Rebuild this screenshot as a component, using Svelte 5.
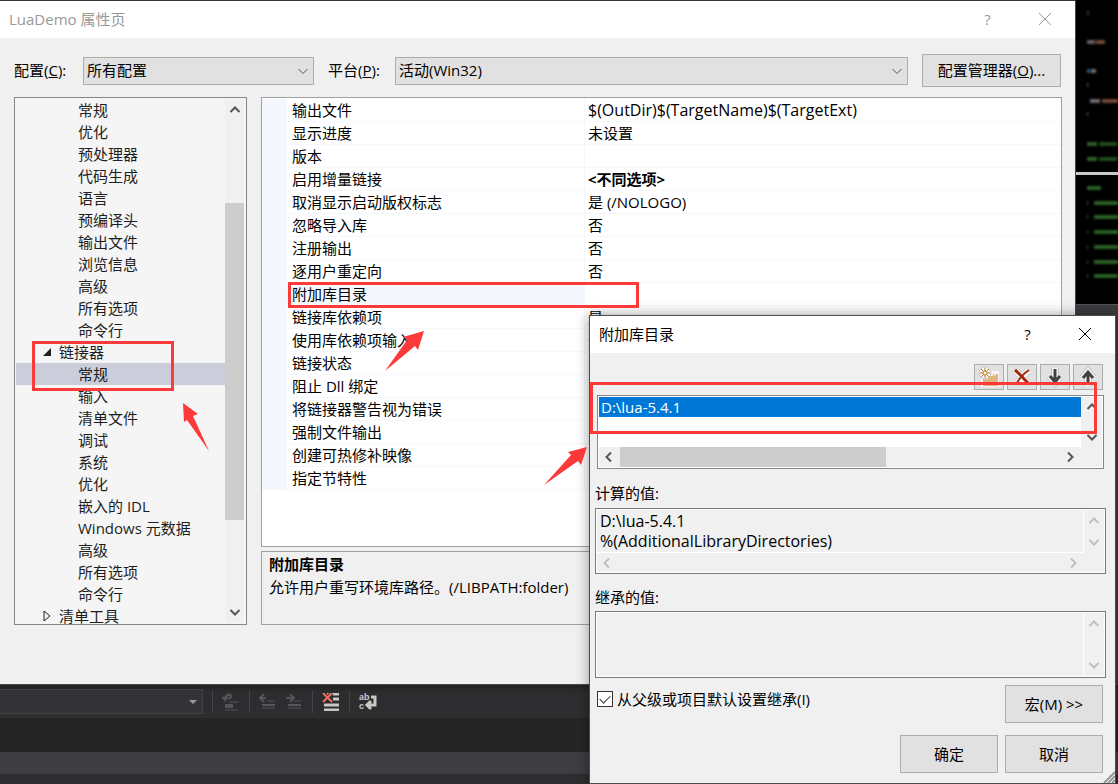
<script lang="ts">
	interface TreeNode {
		label: string;
		state?: 'open' | 'closed';
	}

	interface Property {
		name: string;
		value: string;
		changed?: boolean;
		macro?: boolean;
	}

	const tree: TreeNode[] = [
		{ label: '常规' },
		{ label: '优化' },
		{ label: '预处理器' },
		{ label: '代码生成' },
		{ label: '语言' },
		{ label: '预编译头' },
		{ label: '输出文件' },
		{ label: '浏览信息' },
		{ label: '高级' },
		{ label: '所有选项' },
		{ label: '命令行' },
		{ label: '链接器', state: 'open' },
		{ label: '常规' },
		{ label: '输入' },
		{ label: '清单文件' },
		{ label: '调试' },
		{ label: '系统' },
		{ label: '优化' },
		{ label: '嵌入的 IDL' },
		{ label: 'Windows 元数据' },
		{ label: '高级' },
		{ label: '所有选项' },
		{ label: '命令行' },
		{ label: '清单工具', state: 'closed' },
	];

	const properties: Property[] = [
		{ name: '输出文件', value: '$(OutDir)$(TargetName)$(TargetExt)', macro: true },
		{ name: '显示进度', value: '未设置' },
		{ name: '版本', value: '' },
		{ name: '启用增量链接', value: '<不同选项>', changed: true },
		{ name: '取消显示启动版权标志', value: '是 (/NOLOGO)' },
		{ name: '忽略导入库', value: '否' },
		{ name: '注册输出', value: '否' },
		{ name: '逐用户重定向', value: '否' },
		{ name: '附加库目录', value: '' },
		{ name: '链接库依赖项', value: '是' },
		{ name: '使用库依赖项输入', value: '否' },
		{ name: '链接状态', value: '' },
		{ name: '阻止 Dll 绑定', value: '' },
		{ name: '将链接器警告视为错误', value: '' },
		{ name: '强制文件输出', value: '' },
		{ name: '创建可热修补映像', value: '' },
		{ name: '指定节特性', value: '' },
	];

	// [x, y, width, colour] of the tiny code lines behind the windows
	const codeLines: [number, number, number, string][] = [
		[11, 13, 2, '#2f6b2a'],
		[11, 42, 8, '#8c8c8c'],
		[20, 42, 9, '#a8674c'],
		[11, 71, 3, '#3c7fc0'],
		[15, 71, 5, '#a0a0a0'],
		[11, 85, 1, '#8c8c8c'],
		[14, 101, 10, '#9a9a9a'],
		[26, 101, 17, '#a8674c'],
		[11, 114, 1, '#8c8c8c'],
		[11, 144, 10, '#3c8a35'],
		[23, 144, 18, '#2f6b2a'],
		[11, 159, 10, '#3c8a35'],
		[23, 159, 18, '#2f6b2a'],
		[11, 188, 14, '#3c8a35'],
		...[203, 217, 232, 247, 262, 276].flatMap((y): [number, number, number, string][] => [
			[11, y, 1, '#3c8a35'],
			[18, y, 24, '#3c8a35'],
		]),
	];

	const turns = { down: 0, left: 90, up: 180, right: 270 };

	let selectedNode = $state(12);
	let selectedProperty = $state(8);
	let inherit = $state(true);
	let directory = $state('D:\\lua-5.4.1');
	let computed = $derived(`${directory}\n%(AdditionalLibraryDirectories)`);
</script>

{#snippet chevron(dir: 'up' | 'down' | 'left' | 'right')}
	<svg class="chevron" viewBox="0 0 12 12" aria-hidden="true">
		<path d="M1.5 4l4.500 4.500 4.500-4.500" transform="rotate({turns[dir]} 6 6)" />
	</svg>
{/snippet}

{#snippet cross()}
	<svg viewBox="0 0 14 14" width="14" height="14" fill="none" stroke="currentColor" aria-hidden="true">
		<path d="M1 1l12 12M13 1L1 13" />
	</svg>
{/snippet}

<div class="screen">
	<div class="upper">
		<section class="window props">
			<header class="title-bar inactive">
				<h1>LuaDemo 属性页</h1>
				<button class="caption" aria-label="帮助">?</button>
				<button class="caption" aria-label="关闭">{@render cross()}</button>
			</header>

			<div class="config">
				<label for="configuration">配置(<u>C</u>):</label>
				<div class="combo">
					<select id="configuration">
						<option>所有配置</option>
					</select>
					{@render chevron('down')}
				</div>
				<label for="platform">平台(<u>P</u>):</label>
				<div class="combo">
					<select id="platform">
						<option>活动(Win32)</option>
					</select>
					{@render chevron('down')}
				</div>
				<button class="push">配置管理器(<u>O</u>)...</button>
			</div>

			<div class="panes">
				<div class="tree">
					<ul role="tree">
						{#each tree as node, i}
							<li role="treeitem" aria-selected={selectedNode === i}>
								<button class="node" class:group={node.state} class:selected={selectedNode === i} onclick={() => (selectedNode = i)}>
									{#if node.state}
										<svg viewBox="0 0 10 12" width="10" height="12" aria-hidden="true">
											{#if node.state === 'open'}
												<path d="M9 2v8H1z" fill="#1e1e1e" />
											{:else}
												<path d="M2 1v10l6-5z" fill="none" stroke="#1e1e1e" />
											{/if}
										</svg>
									{/if}
									{node.label}
								</button>
							</li>
						{/each}
					</ul>
					<div class="scroll vertical">
						{@render chevron('up')}
						<div class="track"><div class="thumb"></div></div>
						{@render chevron('down')}
					</div>
				</div>

				<div class="detail">
					<div class="grid">
						<table>
							<colgroup>
								<col class="gutter" />
								<col class="name" />
								<col />
							</colgroup>
							<tbody>
								{#each properties as property, i}
									<tr class:selected={selectedProperty === i} onclick={() => (selectedProperty = i)}>
										<td class="gutter"></td>
										<th scope="row">{property.name}</th>
										<td class:changed={property.changed} class:macro={property.macro}>{property.value}</td>
									</tr>
								{/each}
							</tbody>
						</table>
					</div>
					<div class="description">
						<strong>{properties[selectedProperty].name}</strong>
						<p>允许用户重写环境库路径。(/LIBPATH:folder)</p>
					</div>
				</div>
			</div>
		</section>

		<div class="editor">
			<svg class="code" width="42" height="304" aria-hidden="true">
				{#each codeLines as [x, y, width, colour]}
					<line x1={x} x2={x + width} y1={y} y2={y} stroke={colour} stroke-width="4" />
				{/each}
			</svg>
			<div class="split"></div>
		</div>
	</div>

	<footer class="ide">
		<div class="ide-toolbar">
			<div class="ide-combo">
				<svg viewBox="0 0 8 4" width="8" height="4"><path d="M0 0h8L4 4z" fill="#999" /></svg>
			</div>
			<div class="ide-group">
				<button aria-label="转到上一条消息">
					<svg viewBox="0 0 18 18" width="18" height="18" fill="none" stroke="#555558" stroke-width="2">
						<path d="M3 7C3 2 6 1 8 2c2 1 1 3-1 4M0 4l3 3 3-3" />
						<path d="M7 9h10M3 17h13" stroke-width="1" />
						<path d="M3 11h8v4H3z" fill="#555558" stroke="none" />
					</svg>
				</button>
			</div>
			<div class="ide-group">
				<button aria-label="上一条">
					<svg viewBox="0 0 18 18" width="18" height="18" fill="none" stroke="#555558" stroke-width="2">
						<path d="M1 5h6M5 1L1 5l4 4M3 12h13" />
						<path d="M8 8h8M3 15h13" stroke-width="1" />
					</svg>
				</button>
				<button aria-label="下一条">
					<svg viewBox="0 0 18 18" width="18" height="18" fill="none" stroke="#555558" stroke-width="2">
						<path d="M1 5h7M5 1l4 4-4 4M3 12h13" />
						<path d="M9 8h7M3 15h13" stroke-width="1" />
					</svg>
				</button>
			</div>
			<div class="ide-group">
				<button aria-label="全部清除">
					<svg viewBox="0 0 18 18" width="18" height="18" fill="none" stroke="#c8c8c8">
						<path d="M5 1h12M11 6h6M2 12h15M2 17h15" stroke-width="3" />
						<path d="M1 0l9 9M10 0L1 9" stroke="#2d2d30" stroke-width="4" />
						<path d="M1 0l9 9M10 0L1 9" stroke="#f0705a" stroke-width="2" />
					</svg>
				</button>
			</div>
			<div class="ide-group">
				<button aria-label="自动换行">
					<svg viewBox="0 0 18 18" width="18" height="18">
						<text x="0" y="7">ab</text>
						<text x="0" y="16">c</text>
						<path d="M12 4h4v8H9M12 8l-4 4 4 4" fill="none" stroke="#c8c8c8" stroke-width="3" />
					</svg>
				</button>
			</div>
		</div>
		<div class="output"></div>
		<div class="tabs"></div>
		<div class="status"></div>
	</footer>

	<section class="window directories">
		<header class="title-bar">
			<h2>附加库目录</h2>
			<button class="caption" aria-label="帮助">?</button>
			<button class="caption" aria-label="关闭">{@render cross()}</button>
		</header>

		<div class="tools">
			<button class="push" aria-label="新行">
				<svg viewBox="0 0 22 22" width="22" height="22">
					<path d="M3 8h8l2-3h8v16H3z" fill="#f6f6f6" />
					<path d="M5 10h8l2-2h5v12H5z" fill="#dcb67a" />
					<path d="M13 9h5" stroke="#fff" />
					<circle cx="7" cy="7" r="6" fill="#f6f6f6" stroke="#c8c8c8" />
					<path d="M7 2v10M2 7h10M3 3l8 8M11 3l-8 8" stroke="#c27d1a" />
					<circle cx="7" cy="7" r="2" fill="#fff" stroke="#c27d1a" />
				</svg>
			</button>
			<button class="push" aria-label="删除">
				<svg viewBox="0 0 22 22" width="22" height="22" fill="none">
					<path d="M4 4l14 14M18 4L4 19" stroke="#c4c4c4" stroke-width="7" />
					<path d="M4 4l14 14M18 4L4 19" stroke="#f6f6f6" stroke-width="6" />
					<path d="M4 4c5 4 9 9 14 14" stroke="#a1260d" stroke-width="3" />
					<path d="M18 4C12 8 8 12 5 19" stroke="#a1260d" stroke-width="2" />
				</svg>
			</button>
			<button class="push" aria-label="下移">
				<svg viewBox="0 0 22 22" width="22" height="22" fill="none">
					<path d="M11 2v15M6 10l5 6 5-6" stroke="#c4c4c4" stroke-width="8" />
					<path d="M11 2v15M6 10l5 6 5-6" stroke="#f6f6f6" stroke-width="6" />
					<path d="M11 3v13M6 10l5 6 5-6" stroke="#424242" stroke-width="3" />
				</svg>
			</button>
			<button class="push" aria-label="上移">
				<svg viewBox="0 0 22 22" width="22" height="22" fill="none">
					<path d="M11 20V6M6 12l5-6 5 6" stroke="#c4c4c4" stroke-width="8" />
					<path d="M11 20V6M6 12l5-6 5 6" stroke="#f6f6f6" stroke-width="6" />
					<path d="M11 19V6M6 12l5-6 5 6" stroke="#424242" stroke-width="3" />
				</svg>
			</button>
		</div>

		<div class="list">
			<div class="rows">
				<input aria-label="目录" bind:value={directory} />
			</div>
			<div class="scroll vertical">
				{@render chevron('up')}
				{@render chevron('down')}
			</div>
			<div class="scroll horizontal">
				{@render chevron('left')}
				<div class="track"><div class="thumb"></div></div>
				{@render chevron('right')}
			</div>
		</div>

		<label class="caption-label" for="computed">计算的值:</label>
		<div class="readout computed">
			<textarea id="computed" readonly value={computed}></textarea>
			<div class="scroll vertical">
				{@render chevron('up')}
				{@render chevron('down')}
			</div>
			<div class="scroll horizontal">
				{@render chevron('left')}
				{@render chevron('right')}
			</div>
		</div>

		<label class="caption-label" for="inherited">继承的值:</label>
		<div class="readout">
			<textarea id="inherited" readonly></textarea>
			<div class="scroll vertical">
				{@render chevron('up')}
				{@render chevron('down')}
			</div>
		</div>

		<div class="inherit">
			<label>
				<input type="checkbox" bind:checked={inherit} />
				从父级或项目默认设置继承(I)
			</label>
			<button class="push">宏(M) &gt;&gt;</button>
		</div>
		<div class="actions">
			<button class="push">确定</button>
			<button class="push">取消</button>
		</div>
		<svg class="grip" viewBox="0 0 12 12" width="12" height="12" stroke="#999" stroke-width="2" aria-hidden="true">
			<path d="M1 12L12 1M5 12l7-7M9 12l3-3" />
		</svg>
	</section>

	<!-- markup drawn over both windows -->
	<svg class="annotations" aria-hidden="true">
		<g fill="none" stroke="#fc3a3a" stroke-width="3">
			<rect x="33.5" y="342.5" width="139" height="47" />
			<rect x="289.5" y="283.5" width="348" height="23" />
			<rect x="591.5" y="383.5" width="504" height="49" />
		</g>
		<g fill="#fc3a3a">
			<path d="M183 403l15 11-5 2 16 35-22-31-3 2z" />
			<path d="M424 331l-6 19-3-4-30 25 22-31-4-3z" />
			<path d="M587 447l-6 18-3-4-34 24 27-30-3-3z" />
		</g>
	</svg>
</div>

<style>
	:global(body) {
		margin: 0;
		background: #2d2d30;
	}

	.screen {
		position: relative;
		display: flex;
		flex-direction: column;
		height: 100vh;
		overflow: hidden;
		font-family: "Open Sans", "Noto Sans CJK SC", sans-serif;
		font-size: 15px;
		line-height: 20px;
		color: #000;
	}

	button,
	input,
	select,
	textarea {
		box-sizing: border-box;
		margin: 0;
		font: inherit;
		color: inherit;
	}

	.upper {
		flex: 1;
		min-height: 0;
		display: flex;
	}

	.window {
		display: flex;
		flex-direction: column;
		background: #f0f0f0;
	}

	.props {
		flex: 1;
		min-width: 0;
		border-top: 1px solid #3a373b;
		border-right: 1px solid #444;
		padding-bottom: 59px;
	}

	.title-bar {
		display: flex;
		align-items: center;
		height: 37px;
		flex-shrink: 0;
		box-sizing: border-box;
		padding: 0 2px 2px 9px;
		background: #fff;
	}

	.title-bar h1,
	.title-bar h2 {
		flex: 1;
		margin: 0;
		font-size: inherit;
		font-weight: 400;
	}

	.inactive {
		color: #999;
	}

	.caption {
		display: flex;
		align-items: center;
		justify-content: center;
		width: 57px;
		height: 35px;
		padding: 0;
		border: none;
		background: none;
	}

	.push {
		display: flex;
		align-items: center;
		justify-content: center;
		padding: 0;
		border: 1px solid #adadad;
		background: #e1e1e1;
		white-space: nowrap;
	}

	.config {
		display: grid;
		grid-template-columns: 55px 231px 53px 1fr 139px;
		column-gap: 14px;
		align-items: center;
		padding: 16px 14px 10px;
		white-space: nowrap;
	}

	.config .push {
		height: 33px;
		padding-bottom: 2px;
	}

	.config label {
		padding-bottom: 2px;
	}

	.combo {
		display: grid;
		align-items: center;
		height: 28px;
		box-sizing: border-box;
		border: 1px solid #adadad;
		background: #e1e1e1;
	}

	.combo select {
		grid-area: 1 / 1;
		width: 100%;
		height: 26px;
		padding: 0 24px 2px 3px;
		border: none;
		background: none;
		appearance: none;
	}

	.combo .chevron {
		grid-area: 1 / 1;
		justify-self: end;
		margin-right: 4px;
		stroke-width: 1;
		pointer-events: none;
	}

	.chevron {
		width: 12px;
		height: 12px;
		flex-shrink: 0;
		fill: none;
		stroke: #555;
		stroke-width: 2;
	}

	.scroll {
		display: flex;
		align-items: center;
		justify-content: space-between;
		background: #f0f0f0;
	}

	.scroll.vertical {
		flex-direction: column;
	}

	.track {
		flex: 1;
		align-self: stretch;
		display: flex;
	}

	.thumb {
		background: #cdcdcd;
	}

	.panes {
		flex: 1;
		min-height: 0;
		display: flex;
		gap: 14px;
		padding: 0 13px 0 14px;
	}

	.tree {
		display: flex;
		width: 233px;
		flex-shrink: 0;
		box-sizing: border-box;
		overflow: hidden;
		padding: 1px 2px 1px 1px;
		border: 1px solid #828790;
		background: #f5f5f5;
		color: #1e1e1e;
	}

	.tree ul {
		flex: 1;
		margin: 0;
		padding: 0;
		list-style: none;
	}

	.node {
		display: flex;
		align-items: center;
		width: 100%;
		height: 22px;
		padding: 0 0 0 62px;
		border: none;
		background: none;
		text-align: left;
		white-space: nowrap;
	}

	.node.group {
		gap: 7px;
		padding-left: 26px;
	}

	.node.selected {
		background: #cbcddb;
	}

	.tree .scroll {
		width: 19px;
		padding: 5px 0;
	}

	.tree .track {
		flex-direction: column;
		padding: 87px 0 86px;
	}

	.tree .thumb {
		flex: 1;
	}

	.detail {
		flex: 1;
		min-width: 0;
		display: flex;
		flex-direction: column;
		gap: 4px;
	}

	.grid {
		flex: 1;
		min-height: 0;
		overflow: hidden;
		padding-top: 1px;
		border: 1px solid #a0a0a0;
		background: #fff;
	}

	table {
		width: 100%;
		table-layout: fixed;
		border-spacing: 0;
	}

	col.gutter {
		width: 25px;
	}

	col.name {
		width: 298px;
	}

	th,
	td {
		height: 22px;
		padding: 0 0 0 3px;
		border-bottom: 1px solid #f4f7fc;
		font-weight: 400;
		text-align: left;
		white-space: nowrap;
	}

	th {
		padding-left: 5px;
		border-right: 1px solid #f4f7fc;
	}

	td.gutter,
	tr.selected th {
		background: #f4f7fc;
	}

	td.changed {
		font-weight: 700;
	}

	td.macro {
		font-size: 16px;
	}

	.description {
		height: 74px;
		box-sizing: border-box;
		padding: 2px 7px;
		border: 1px solid #a0a0a0;
	}

	.description p {
		margin: 3px 0 0;
	}

	.editor {
		width: 42px;
		flex-shrink: 0;
		background: linear-gradient(#000 304px, #555 304px, #555 305px, #3b3b40 305px);
	}

	.code {
		display: block;
		opacity: 0.7;
		filter: blur(1px);
	}

	.split {
		position: absolute;
		top: 172px;
		right: 0;
		width: 42px;
		height: 3px;
		background: #c8c8c8;
	}

	.ide-toolbar {
		display: flex;
		align-items: center;
		height: 34px;
		box-sizing: border-box;
		border-top: 1px solid #4a4a4d;
		background: linear-gradient(#222 0, #2d2d30 8px);
	}

	.ide-combo {
		display: flex;
		align-items: center;
		justify-content: flex-end;
		width: 203px;
		height: 25px;
		box-sizing: border-box;
		margin-right: 9px;
		padding-right: 5px;
		border: 1px solid #434346;
		border-left: none;
		background: #333337;
	}

	.ide-group {
		display: flex;
		gap: 8px;
		height: 22px;
		padding: 0 9px;
		border-left: 1px solid #46464a;
	}

	.ide-group button {
		display: flex;
		align-items: center;
		padding: 0;
		border: none;
		background: none;
	}

	.ide-group text {
		font: 700 9px/8px "Liberation Sans", sans-serif;
		fill: #c8c8c8;
	}

	.output {
		height: 34px;
		background: #252526;
	}

	.tabs {
		height: 22px;
		background: #3e3e42;
	}

	.status {
		height: 10px;
		background: #2d2d30;
	}

	.directories {
		position: absolute;
		top: 315px;
		left: 589px;
		width: 525px;
		border: 1px solid #4c4c4c;
		box-shadow: 0 0 12px rgba(0, 0, 0, 0.4);
	}

	.tools {
		display: flex;
		justify-content: flex-end;
		gap: 3px;
		padding: 11px 12px 5px;
	}

	.tools .push {
		width: 30px;
		height: 26px;
	}

	.list {
		display: grid;
		grid-template: 50px 20px / 1fr 21px;
		margin: 0 11px 0 7px;
		padding: 1px;
		border: 1px solid #828790;
		background: #fff;
	}

	.list .vertical,
	.readout .vertical {
		grid-row: span 2;
	}

	.list .vertical {
		padding: 4px 0 24px;
	}

	.list .horizontal,
	.readout .horizontal {
		grid-area: 2 / 1;
		padding: 0 5px 0 4px;
	}

	.rows input {
		display: block;
		width: 100%;
		height: 20px;
		padding: 0 2px;
		border: none;
		background: #0078d7;
		color: #fff;
	}

	.list .track {
		margin-left: 5px;
	}

	.list .thumb {
		width: 60%;
	}

	.caption-label {
		padding: 14px 5px 5px;
	}

	.readout {
		display: grid;
		grid-template: 63px / 1fr 20px;
		margin: 0 9px 0 5px;
		padding: 1px;
		border: 1px solid #7a7a7a;
		background: #fff;
	}

	.readout.computed {
		grid-template: 42px 1px 19px / 1fr 20px;
	}

	.readout.computed .vertical {
		grid-row: span 3;
	}

	.readout.computed .horizontal {
		grid-area: 3 / 1;
	}

	.computed + .caption-label {
		padding: 13px 5px 4px;
	}

	.readout textarea {
		display: block;
		width: 100%;
		height: 100%;
		padding: 1px 3px;
		border: none;
		border-right: 1px solid #fff;
		overflow: hidden;
		resize: none;
		background: #f0f0f0;
		font-size: 16px;
		white-space: pre;
	}

	.readout .chevron {
		stroke: #bfbfbf;
	}

	.readout .vertical {
		padding: 5px 0;
	}

	.readout.computed .vertical {
		padding-bottom: 24px;
	}

	.inherit {
		display: flex;
		align-items: flex-start;
		justify-content: space-between;
		padding: 7px 12px 12px 7px;
	}

	.inherit label {
		display: flex;
		align-items: center;
		gap: 4px;
		padding-top: 4px;
	}

	.inherit input {
		width: 16px;
		height: 16px;
		border: 1px solid #333;
		background: #fff;
		appearance: none;
	}

	.inherit input:checked::before {
		content: "";
		display: block;
		width: 9px;
		height: 5px;
		margin: 3px 2px;
		border: solid #333;
		border-width: 0 0 1px 1px;
		transform: rotate(-45deg);
	}

	.inherit .push,
	.actions .push {
		width: 98px;
		height: 38px;
	}

	.actions {
		display: flex;
		justify-content: flex-end;
		gap: 7px;
		padding: 0 12px 10px;
	}

	.grip {
		position: absolute;
		right: 0;
		bottom: 0;
	}

	.annotations {
		position: absolute;
		inset: 0;
		width: 100%;
		height: 100%;
		pointer-events: none;
	}
</style>
